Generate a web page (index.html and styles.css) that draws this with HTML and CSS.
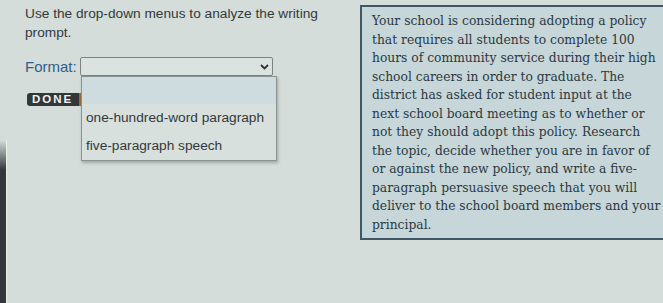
FILE: index.html
```html
<!DOCTYPE html>
<html>
<head>
<meta charset="utf-8">
<link rel="stylesheet" href="styles.css">
</head>
<body>
<div class="edge"></div>
<div class="page">
  <div class="left">
    <p class="intro">Use the drop-down menus to analyze the writing prompt.</p>
    <div class="field">
      <span class="label">Format:</span>
      <div class="select">
        <svg class="chev" width="9" height="6" viewBox="0 0 9 6"><path d="M1 1 L4.5 4.5 L8 1" fill="none" stroke="#333" stroke-width="1.8"/></svg>
        <ul class="menu">
          <li class="opt blank"></li>
          <li class="opt">one-hundred-word paragraph</li>
          <li class="opt">five-paragraph speech</li>
        </ul>
      </div>
    </div>
    <div class="done-row">
      <span class="done">DONE</span><span class="done-tab"></span>
    </div>
  </div>
  <div class="prompt">
    <p>Your school is considering adopting a policy that requires all students to complete 100 hours of community service during their high school careers in order to graduate. The district has asked for student input at the next school board meeting as to whether or not they should adopt this policy. Research the topic, decide whether you are in favor of or against the new policy, and write a five-paragraph persuasive speech that you will deliver to the school board members and your principal.</p>
  </div>
</div>
</body>
</html>
```
FILE: styles.css
```css
html, body {
  margin: 0;
  padding: 0;
}
body {
  width: 663px;
  height: 303px;
  overflow: hidden;
  background: #d4ddd9;
  position: relative;
}
.edge {
  position: absolute;
  left: 0;
  top: 140px;
  width: 6px;
  height: 170px;
  background: linear-gradient(to bottom, rgba(50,55,60,0), #33383d 30px);
  border-right: 1px solid #eef0ea;
}
.page {
  display: flex;
  align-items: flex-start;
}
.left {
  flex: none;
  width: 335px;
  padding: 4px 0 0 25px;
  box-sizing: border-box;
  font-family: "Liberation Sans", Arial, sans-serif;
  color: #33393b;
}
.intro {
  margin: 0;
  font-size: 13.7px;
  line-height: 19px;
  width: 300px;
}
.field {
  display: flex;
  align-items: center;
  margin-top: 15px;
}
.label {
  font-size: 15px;
  color: #30608a;
  width: 55px;
}
.select {
  position: relative;
  width: 193px;
  height: 19px;
  border: 1px solid #7d8584;
  border-radius: 2px;
  background: #dbe3e0;
  box-sizing: border-box;
}
.chev {
  position: absolute;
  right: 3px;
  top: 6px;
}
.menu {
  position: absolute;
  left: 0;
  top: 18px;
  width: 194px;
  margin: 0;
  padding: 0;
  list-style: none;
  background: #d8e0dd;
  border: 1px solid #8a9290;
  box-shadow: 1px 2px 3px rgba(60,70,70,0.35);
  z-index: 2;
}
.opt {
  font-size: 13.7px;
  line-height: 28px;
  padding-left: 4px;
  color: #33393b;
}
.opt.blank {
  height: 27px;
  background: #cfdcdf;
}
.done-row {
  display: flex;
  align-items: center;
  margin-top: 17px;
  margin-left: 2px;
}
.done {
  background: #34373a;
  color: #f2f2f2;
  font-weight: bold;
  font-size: 11.5px;
  letter-spacing: 2px;
  line-height: 13px;
  padding: 0 6px 0 5px;
  border-radius: 3px 0 0 3px;
}
.done-tab {
  width: 6px;
  height: 13px;
  background: #a0693c;
}
.prompt {
  margin-top: 5px;
  margin-left: 25px;
  width: 330px;
  flex: none;
  border: 2px solid #3f5767;
  background: #c6d6d9;
  box-sizing: border-box;
  padding: 5px 0 10px 10px;
  height: 235px;
}
.prompt p {
  margin: 0;
  width: 290px;
  font-family: "DejaVu Serif", Georgia, serif;
  font-size: 12.3px;
  line-height: 18.5px;
  color: #2b3942;
}
```
